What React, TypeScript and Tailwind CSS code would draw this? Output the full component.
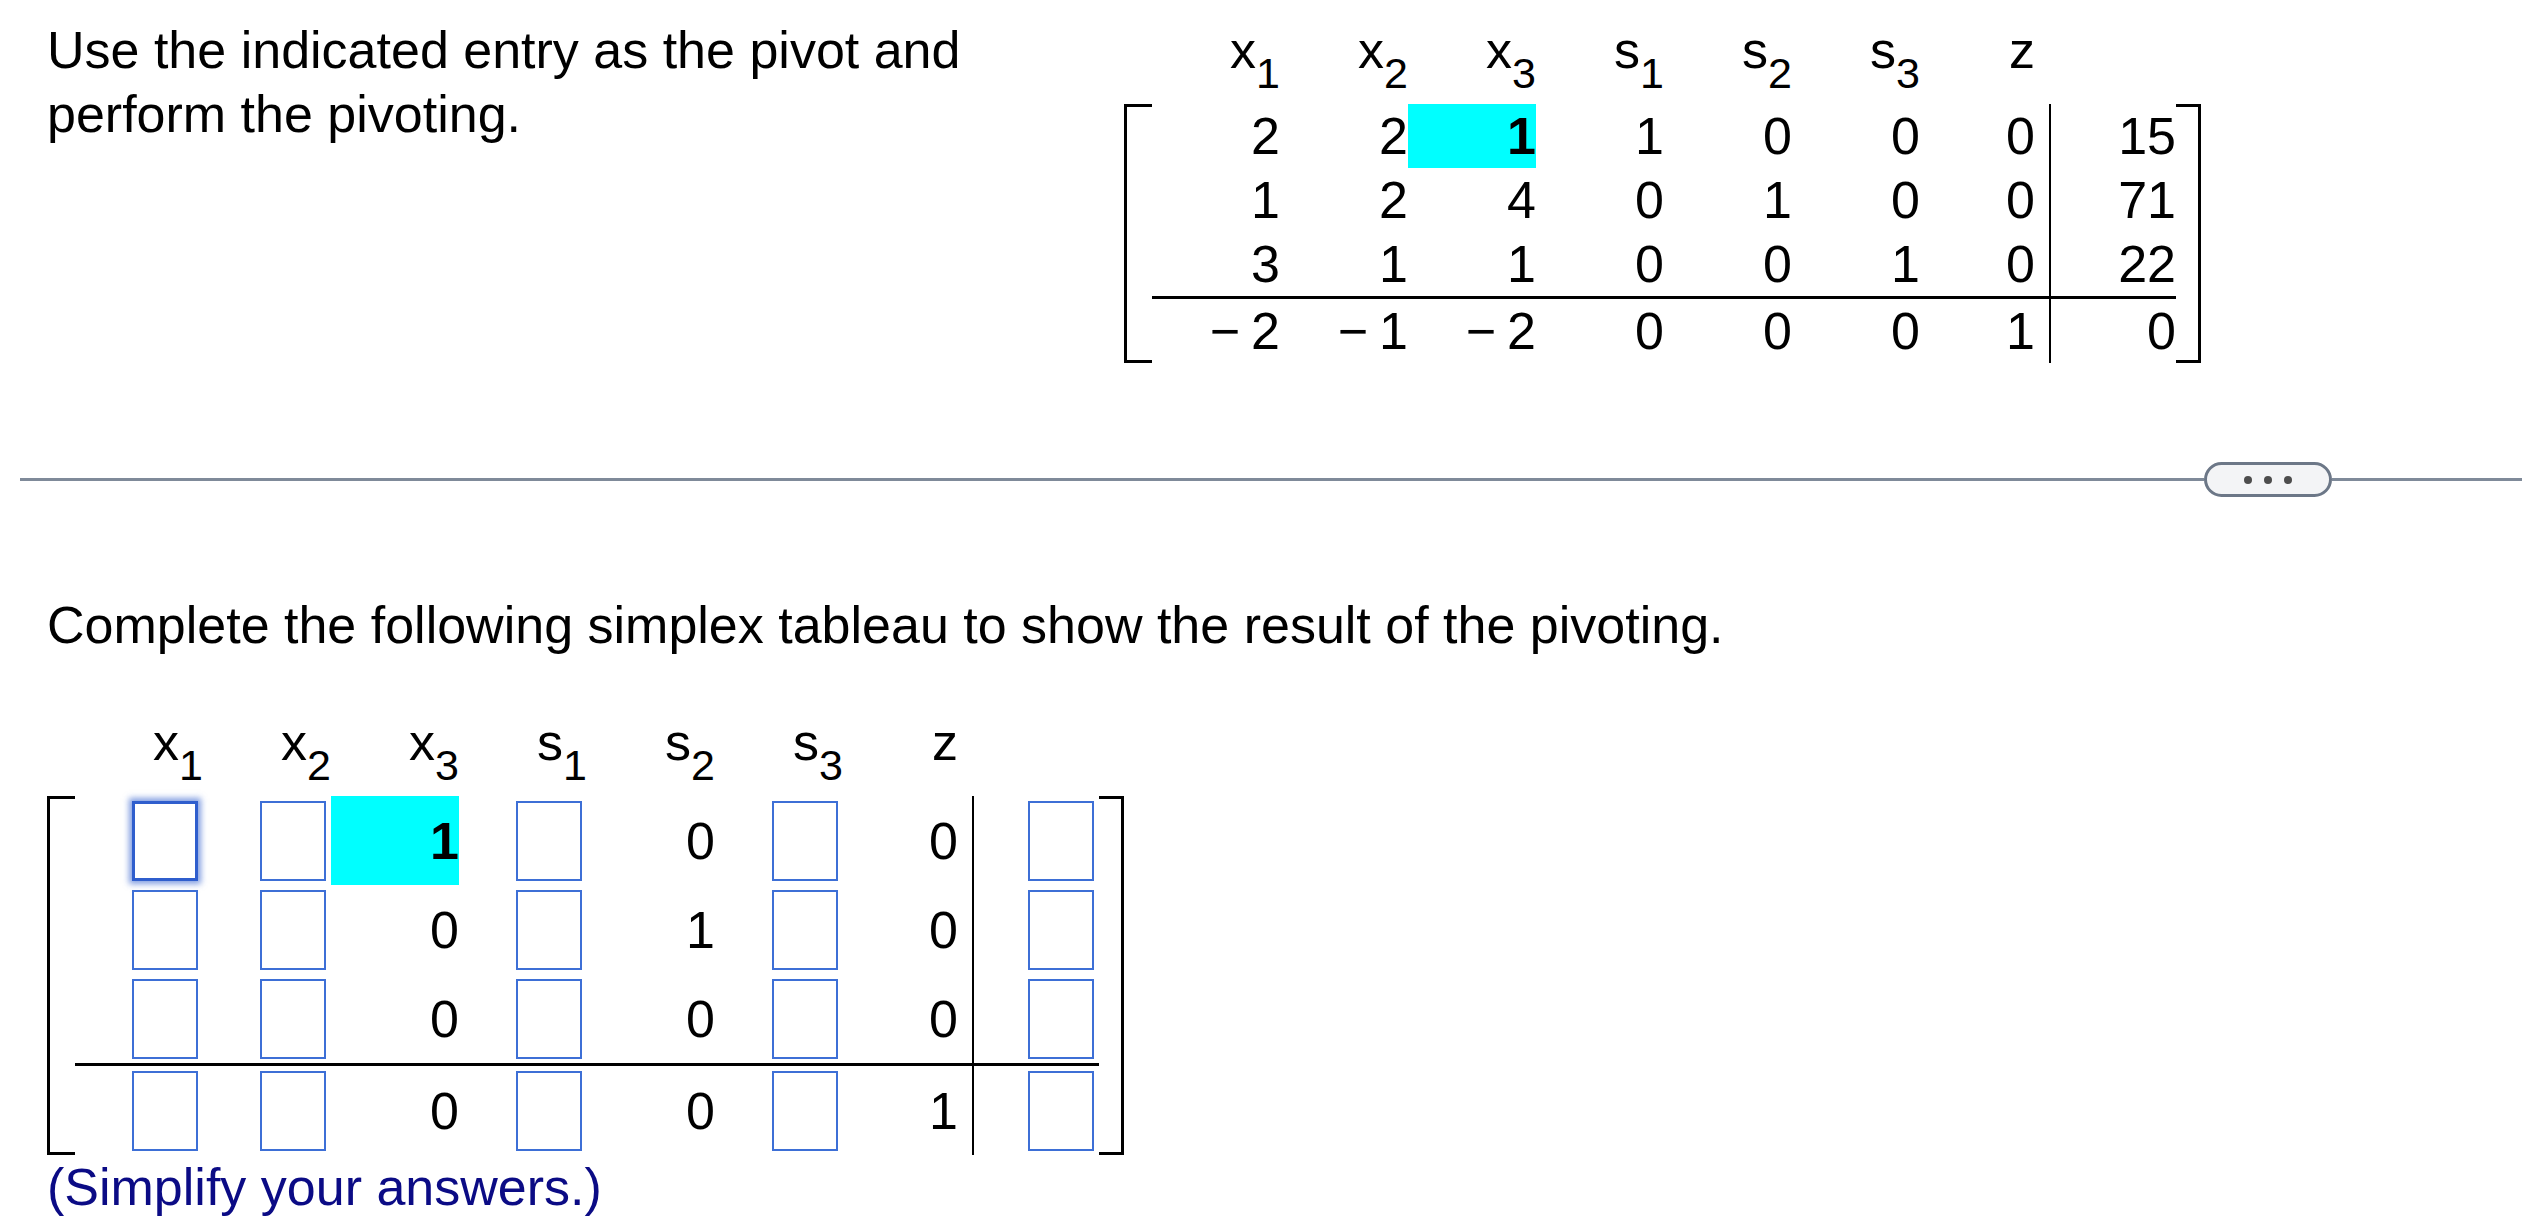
import React from "react";

// null = empty answer box, "*" prefix = highlighted pivot entry
type Cell = string | null;

const FONT = "font-['Liberation_Sans',Arial,Helvetica,sans-serif]";

const headers: [string, string][] = [
  ["x", "1"],
  ["x", "2"],
  ["x", "3"],
  ["s", "1"],
  ["s", "2"],
  ["s", "3"],
  ["z", ""],
];

const colW = [
  "w-[128px]",
  "w-[128px]",
  "w-[128px]",
  "w-[128px]",
  "w-[128px]",
  "w-[128px]",
  "w-[115px]",
];

const startTableau: Cell[][] = [
  ["2", "2", "*1", "1", "0", "0", "0", "15"],
  ["1", "2", "4", "0", "1", "0", "0", "71"],
  ["3", "1", "1", "0", "0", "1", "0", "22"],
  ["-2", "-1", "-2", "0", "0", "0", "1", "0"],
];

const answerTableau: Cell[][] = [
  [null, null, "*1", null, "0", null, "0", null],
  [null, null, "0", null, "1", null, "0", null],
  [null, null, "0", null, "0", null, "0", null],
  [null, null, "0", null, "0", null, "1", null],
];

function Num({ v }: { v: string }) {
  if (v.startsWith("-")) {
    return (
      <span>
        −<span className="ml-[11px]">{v.slice(1)}</span>
      </span>
    );
  }
  return <span>{v}</span>;
}

function CellView({
  v,
  width,
  rowH,
  focused,
}: {
  v: Cell;
  width: string;
  rowH: string;
  focused?: boolean;
}) {
  if (v === null) {
    return (
      <div className={`${width} ${rowH} flex items-center justify-end pr-[5px]`}>
        {focused ? (
          <div className="w-[66px] h-[80px] bg-white border-[3px] border-[#2f5ecd] shadow-[0_0_6px_3px_rgba(47,94,205,0.6)]" />
        ) : (
          <div className="w-[66px] h-[80px] bg-white border-2 border-[#3d6fd6]" />
        )}
      </div>
    );
  }
  const pivot = v.startsWith("*");
  const text = pivot ? v.slice(1) : v;
  return (
    <div
      className={`${width} ${rowH} flex items-center justify-end leading-[64px] ${
        pivot ? "bg-[#00ffff] font-bold" : ""
      }`}
    >
      <Num v={text} />
    </div>
  );
}

function Tableau({ rows, rowH }: { rows: Cell[][]; rowH: string }) {
  const body = (r: Cell[], ri: number) => (
    <div key={ri} className="flex">
      {r.slice(0, 7).map((c, ci) => (
        <CellView
          key={ci}
          v={c}
          width={colW[ci]}
          rowH={rowH}
          focused={ri === 0 && ci === 0 && c === null}
        />
      ))}
    </div>
  );
  const rhs = (r: Cell[], ri: number) => (
    <CellView key={ri} v={r[7]} width="w-[125px]" rowH={rowH} />
  );

  return (
    <div className="flex flex-col text-[52px] text-black">
      <div className="flex h-[86px] leading-[64px]">
        <div className="w-[28px]" />
        {headers.map(([l, s], i) => (
          <div key={i} className={`${colW[i]} text-right`}>
            {l}
            {s && (
              <span className="text-[43px] leading-none align-[-20px]">{s}</span>
            )}
          </div>
        ))}
      </div>
      <div className="flex">
        <div className="w-[28px] border-l-[3px] border-y-[3px] border-black" />
        <div className="flex flex-col w-[897px]">
          {rows.slice(0, 3).map((r, i) => body(r, i))}
          <div className="h-[3px] bg-black" />
          {body(rows[3], 3)}
        </div>
        <div className="w-[2px] bg-black" />
        <div className="flex flex-col w-[125px]">
          {rows.slice(0, 3).map((r, i) => rhs(r, i))}
          <div className="h-[3px] bg-black" />
          {rhs(rows[3], 3)}
        </div>
        <div className="w-[25px] border-r-[3px] border-y-[3px] border-black" />
      </div>
    </div>
  );
}

export default function App() {
  return (
    <div className={`${FONT} bg-white min-h-screen w-full text-black`}>
      <div className="flex pt-[18px] pl-[47px]">
        <div className="w-[1077px] shrink-0 text-[52px] leading-[64px]">
          Use the indicated entry as the pivot and
          <br />
          perform the pivoting.
        </div>
        <Tableau rows={startTableau} rowH="h-[64px]" />
      </div>

      <div className="flex items-center h-[35px] mt-[99px] pl-[20px]">
        <div className="flex-1 h-[3px] bg-[#7f8a99]" />
        <button className="w-[128px] h-[35px] rounded-full border-[3px] border-[#6c7787] bg-[#f3f4f6] flex items-center justify-center gap-[12px]">
          <span className="w-[8px] h-[8px] rounded-full bg-[#4d4d4d]" />
          <span className="w-[8px] h-[8px] rounded-full bg-[#4d4d4d]" />
          <span className="w-[8px] h-[8px] rounded-full bg-[#4d4d4d]" />
        </button>
        <div className="w-[190px] h-[3px] bg-[#7f8a99]" />
      </div>

      <div className="pl-[47px]">
        <div className="mt-[96px] text-[52px] leading-[64px]">
          Complete the following simplex tableau to show the result of the pivoting.
        </div>
        <div className="mt-[53px]">
          <Tableau rows={answerTableau} rowH="h-[89px]" />
        </div>
        <div className="text-[52px] leading-[64px] text-[#0b0b85]">
          (Simplify your answers.)
        </div>
      </div>
    </div>
  );
}
